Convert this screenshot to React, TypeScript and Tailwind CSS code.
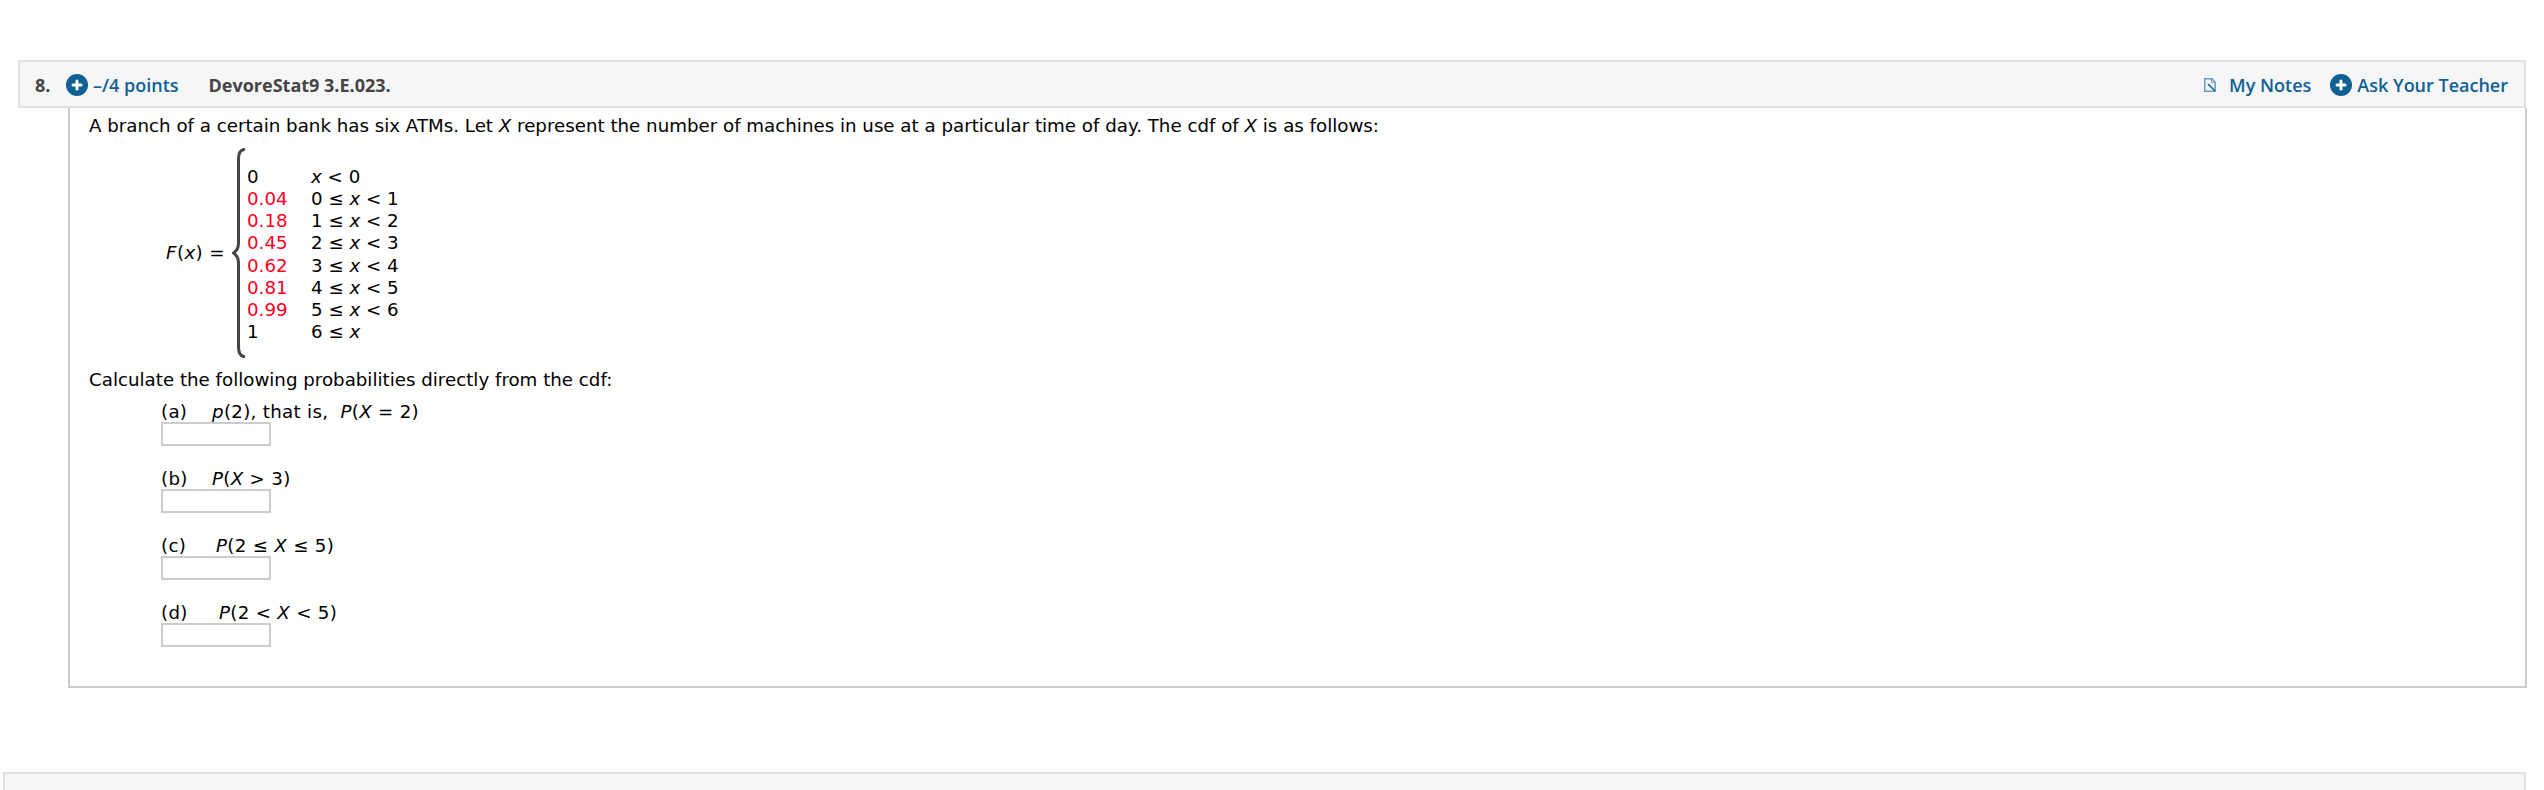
const Plus = () => (
  <svg width="22" height="22" viewBox="0 0 22 22" className="shrink-0">
    <circle cx="11" cy="11" r="11" fill="#0f6193" />
    <path d="M11 7v8M7 11h8" stroke="#fff" strokeWidth="3" strokeLinecap="round" />
  </svg>
);

const NoteIcon = () => (
  <svg width="12" height="14" viewBox="0 0 12 14" fill="none" className="shrink-0">
    <path d="M.8.8h7l3.4 3.4v9H.8z" stroke="#6a9dbd" strokeWidth="1.5" />
    <path d="M7.5.8v3.6h3.7" stroke="#6a9dbd" strokeWidth="1" />
    <path d="M4 6l7 7" stroke="#0f6193" strokeWidth="1.500" />
  </svg>
);

const Brace = () => (
  <svg width="14" height="210" viewBox="0 0 14 210" fill="none" className="shrink-0">
    <path
      d="M13 1C8 2 6.500 5 6.500 12V95C6.500 100 4.500 103 1.500 105C4.500 107 6.500 110 6.500 115V198C6.500 205 8 208 13 209"
      stroke="#444"
      strokeWidth="3"
    />
  </svg>
);

const V = ({ children }: { children: React.ReactNode }) => <i>{children}</i>;

const rows: [string, boolean, React.ReactNode][] = [
  ["0", false, <><V>x</V>&nbsp;&lt;&nbsp;0</>],
  ["0.04", true, <>0&nbsp;≤&nbsp;<V>x</V>&nbsp;&lt;&nbsp;1</>],
  ["0.18", true, <>1&nbsp;≤&nbsp;<V>x</V>&nbsp;&lt;&nbsp;2</>],
  ["0.45", true, <>2&nbsp;≤&nbsp;<V>x</V>&nbsp;&lt;&nbsp;3</>],
  ["0.62", true, <>3&nbsp;≤&nbsp;<V>x</V>&nbsp;&lt;&nbsp;4</>],
  ["0.81", true, <>4&nbsp;≤&nbsp;<V>x</V>&nbsp;&lt;&nbsp;5</>],
  ["0.99", true, <>5&nbsp;≤&nbsp;<V>x</V>&nbsp;&lt;&nbsp;6</>],
  ["1", false, <>6&nbsp;≤&nbsp;<V>x</V></>],
];

const parts: [string, React.ReactNode, string][] = [
  ["(a)", <><V>p</V>(2), that is,&nbsp; <V>P</V>(<V>X</V> = 2)</>, "w-[51px]"],
  ["(b)", <><V>P</V>(<V>X</V> &gt; 3)</>, "w-[51px]"],
  ["(c)", <><V>P</V>(2 ≤ <V>X</V> ≤ 5)</>, "w-[55px]"],
  ["(d)", <><V>P</V>(2 &lt; <V>X</V> &lt; 5)</>, "w-[58px]"],
];

export default function App() {
  return (
    <div className="bg-white h-[790px] overflow-hidden pt-[60px] pr-[18px] font-['DejaVu_Sans',sans-serif] text-[18.23px] text-black">
      <div className="ml-[18px] h-[48px] border-2 border-[#e0e0e0] bg-[#f6f6f6] flex items-center justify-between pl-[15px] pr-[16px] pt-[2px] font-['Open_Sans',sans-serif] text-[18px] font-semibold">
        <div className="flex items-center">
          <span className="text-[#444] font-bold w-[31px]">8.</span>
          <Plus />
          <span className="text-[#0f6193] ml-[5px]">–/4 points</span>
          <span className="text-[#444] font-bold ml-[30px]">DevoreStat9 3.E.023.</span>
        </div>
        <div className="flex items-center text-[#0f6193]">
          <NoteIcon />
          <span className="ml-[13px]">My Notes</span>
          <span className="ml-[19px]"><Plus /></span>
          <span className="ml-[5px]">Ask Your Teacher</span>
        </div>
      </div>
      <div className="ml-[68px] mr-[-1px] h-[580px] border-2 border-t-0 border-[#cccccc] pl-[19px] pt-[6px]">
        <p className="leading-[24px]">
          A branch of a certain bank has six ATMs. Let <V>X</V> represent the number of machines in use at a particular time of day. The cdf of <V>X</V> is as follows:
        </p>
        <div className="flex items-center ml-[77px] mt-[10px] h-[210px]">
          <span className="whitespace-nowrap w-[66px] tracking-[0.4px]"><V>F</V>(<V>x</V>) =</span>
          <Brace />
          <div className="grid grid-cols-[64px_auto] leading-[22.2px] ml-[1px] pt-[3px]">
            {rows.map(([value, red, range], i) => (
              <div key={i} className="contents">
                <span className={red ? "text-[#ff0022]" : ""}>{value}</span>
                <span>{range}</span>
              </div>
            ))}
          </div>
        </div>
        <p className="leading-[24px] mt-[10px]">Calculate the following probabilities directly from the cdf:</p>
        <div className="ml-[72px] mt-[8px] flex flex-col gap-[21px]">
          {parts.map(([label, expr, w]) => (
            <div key={label}>
              <div className="flex leading-[24px] h-[22px]">
                <span className={`${w} tracking-[0.3px]`}>{label}</span>
                <span className="tracking-[0.3px]">{expr}</span>
              </div>
              <input className="block w-[110px] h-[24px] border-2 border-[#cccccc] bg-white" />
            </div>
          ))}
        </div>
      </div>
      <div className="ml-[3px] mt-[84px] h-[40px] border-2 border-[#e0e0e0] bg-[#f6f6f6]" />
    </div>
  );
}
